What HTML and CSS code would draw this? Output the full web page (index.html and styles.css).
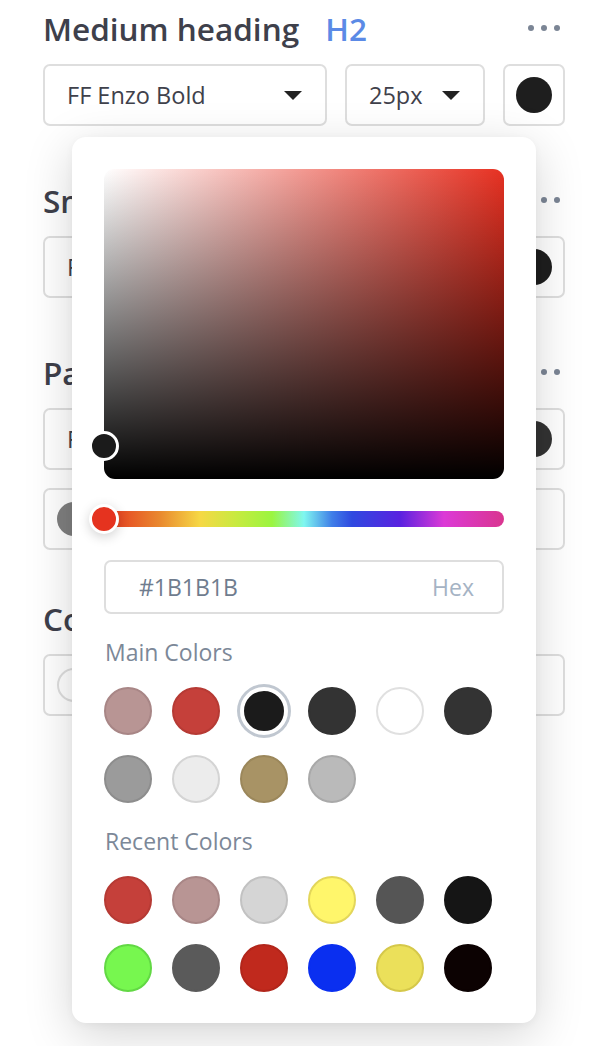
FILE: index.html
```html
<!DOCTYPE html>
<html>
<head>
<meta charset="utf-8">
<link rel="stylesheet" href="styles.css">
</head>
<body>
<div class="page">
  <section class="sec sec-first">
    <div class="sec-head">
      <h2 class="title">Medium heading <span class="tag">H2</span></h2>
      <span class="dots"><i></i><i></i><i></i></span>
    </div>
    <div class="row">
      <div class="field select font-sel"><span>FF Enzo Bold</span><span class="caret"></span></div>
      <div class="field select size-sel"><span>25px</span><span class="caret"></span></div>
      <div class="field color-box"><span class="dot d-black"></span></div>
    </div>
  </section>

  <section class="sec">
    <div class="sec-head">
      <h2 class="title">Small heading <span class="tag">H3</span></h2>
      <span class="dots"><i></i><i></i><i></i></span>
    </div>
    <div class="row">
      <div class="field select font-sel"><span>FF Enzo Bold</span><span class="caret"></span></div>
      <div class="field select size-sel"><span>20px</span><span class="caret"></span></div>
      <div class="field color-box"><span class="dot d-black"></span></div>
    </div>
  </section>

  <section class="sec sec-para">
    <div class="sec-head">
      <h2 class="title">Paragraph <span class="tag">P</span></h2>
      <span class="dots"><i></i><i></i><i></i></span>
    </div>
    <div class="row">
      <div class="field select font-sel"><span>FF Enzo Regular</span><span class="caret"></span></div>
      <div class="field select size-sel"><span>16px</span><span class="caret"></span></div>
      <div class="field color-box"><span class="dot d-dark"></span></div>
    </div>
    <div class="row">
      <div class="field wide"><span class="dot-sm d-grey"></span><span>Link</span></div>
    </div>
  </section>

  <section class="sec sec-last">
    <div class="sec-head">
      <h2 class="title">Co</h2>
    </div>
    <div class="row">
      <div class="field wide"><span class="dot-sm d-empty"></span></div>
    </div>
  </section>
</div>

<div class="popover">
  <div class="sat">
    <span class="sat-handle"></span>
  </div>
  <div class="hue">
    <span class="hue-handle"></span>
  </div>
  <div class="hex">
    <span class="hex-val">#1B1B1B</span>
    <span class="hex-lbl">Hex</span>
  </div>
  <div class="label">Main Colors</div>
  <div class="swatches">
    <span class="sw" style="background:#b89594;border-color:#a88686"></span>
    <span class="sw" style="background:#c5403a;border-color:#b63a34"></span>
    <span class="sw selected" style="background:#1b1b1b"></span>
    <span class="sw" style="background:#333333;border-color:#333333"></span>
    <span class="sw" style="background:#ffffff;border-color:#e0e0e0"></span>
    <span class="sw" style="background:#333333;border-color:#333333"></span>
    <span class="sw" style="background:#9b9b9b;border-color:#8d8d8d"></span>
    <span class="sw" style="background:#ececec;border-color:#d4d4d4"></span>
    <span class="sw" style="background:#a89365;border-color:#9b875b"></span>
    <span class="sw" style="background:#bababa;border-color:#a9a9a9"></span>
  </div>
  <div class="label">Recent Colors</div>
  <div class="swatches">
    <span class="sw" style="background:#c5403a;border-color:#b63a34"></span>
    <span class="sw" style="background:#b89594;border-color:#a88686"></span>
    <span class="sw" style="background:#d5d5d5;border-color:#c2c2c2"></span>
    <span class="sw" style="background:#fff66b;border-color:#e3d65a"></span>
    <span class="sw" style="background:#555555;border-color:#555555"></span>
    <span class="sw" style="background:#151515;border-color:#151515"></span>
    <span class="sw" style="background:#77f74f;border-color:#62d844"></span>
    <span class="sw" style="background:#5a5a5a;border-color:#5a5a5a"></span>
    <span class="sw" style="background:#c0291d;border-color:#b2261b"></span>
    <span class="sw" style="background:#0a2ff0;border-color:#0a2ff0"></span>
    <span class="sw" style="background:#ebe05a;border-color:#d5c84a"></span>
    <span class="sw" style="background:#0c0202;border-color:#0c0202"></span>
  </div>
</div>
</body>
</html>
```

FILE: styles.css
```css
* { box-sizing: border-box; }
html, body { margin: 0; padding: 0; background: #ffffff; }
body {
  width: 590px;
  height: 1046px;
  position: relative;
  overflow: hidden;
  font-family: "Open Sans", "Noto Sans", sans-serif;
  color: #3e404b;
}
.page {
  padding: 8px 25px 0 43px;
  display: flex;
  flex-direction: column;
}
.sec { display: flex; flex-direction: column; gap: 18px; margin-bottom: 54px; }
.sec.sec-para { margin-bottom: 48px; }
.sec .sec-head { margin-bottom: -2px; }
.sec-head {
  height: 40px;
  display: flex;
  align-items: center;
  justify-content: space-between;
}
.title {
  margin: 0;
  font-size: 31.5px;
  font-weight: 600;
  color: #3e404b;
  white-space: nowrap;
}
.tag { color: #5b8ae6; margin-left: 18px; }
.dots { display: flex; gap: 7px; padding-right: 5px; }
.dots i { width: 6px; height: 6px; border-radius: 50%; background: #7b8595; display: block; }
.row { display: flex; gap: 18px; }
.field {
  height: 62px;
  border: 2px solid #dedede;
  border-radius: 7px;
  background: #fff;
  display: flex;
  align-items: center;
  font-family: "Open Sans", sans-serif;
  font-size: 23.5px;
  color: #3f414b;
}
.select { justify-content: space-between; padding: 0 23px 0 22px; }
.font-sel { width: 284px; }
.size-sel { width: 140px; }
.color-box { width: 62px; justify-content: center; }
.wide { flex: 1; padding-left: 12px; gap: 14px; }
.caret {
  width: 0; height: 0;
  border-left: 9px solid transparent;
  border-right: 9px solid transparent;
  border-top: 9px solid #222;
}
.dot { width: 36px; height: 36px; border-radius: 50%; display: block; }
.dot-sm { width: 34px; height: 34px; border-radius: 50%; display: block; }
.d-black { background: #1e1e1e; }
.d-dark { background: #333; }
.d-grey { background: #7f7f7f; }
.d-empty { border: 2px solid #dedede; }

.popover {
  position: absolute;
  left: 72px;
  top: 137px;
  width: 464px;
  height: 886px;
  background: #fff;
  border-radius: 14px;
  box-shadow: 0 12px 48px rgba(0, 0, 0, 0.17), 0 2px 8px rgba(0,0,0,0.04);
  padding: 32px 32px 0 32px;
  display: flex;
  flex-direction: column;
}
.sat {
  position: relative;
  width: 400px;
  height: 310px;
  border-radius: 11px;
  background:
    linear-gradient(to top, #000 0%, rgba(0,0,0,0) 100%),
    linear-gradient(to right, #ffffff 0%, #e73122 100%);
}
.sat-handle {
  position: absolute;
  left: -15px;
  top: 262px;
  width: 30px;
  height: 30px;
  border-radius: 50%;
  background: #1b1b1b;
  border: 3px solid #fff;
}
.hue {
  position: relative;
  margin-top: 32px;
  width: 400px;
  height: 16px;
  border-radius: 8px;
  background: linear-gradient(to right,
    #e5331f 0%, #e9892f 14%, #f6d845 24%, #c8ea40 33%, #9bf540 42%,
    #7ff7f0 50%, #3f7ee8 57%, #2f49e0 62%, #5a22e0 74%, #dc3ad6 85%, #d9358f 100%);
}
.hue-handle {
  position: absolute;
  left: -15px;
  top: -7px;
  width: 30px;
  height: 30px;
  border-radius: 50%;
  background: #e5331f;
  border: 3px solid #fff;
  box-shadow: 0 3px 12px rgba(0,0,0,0.18);
}
.hex {
  margin-top: 33px;
  height: 54px;
  border: 2px solid #dedede;
  border-radius: 7px;
  display: flex;
  align-items: center;
  justify-content: space-between;
  padding: 0 28px 0 33px;
  font-family: "Open Sans", sans-serif;
  font-size: 23px;
}
.hex-val { color: #6f7c8e; }
.hex-lbl { color: #a5b3c4; }
.label {
  margin-top: 26px;
  height: 24px;
  line-height: 24px;
  font-size: 23px;
  color: #7c8898;
  padding-left: 1px;
}
.swatches {
  margin-top: 23px;
  display: grid;
  grid-template-columns: repeat(6, 48px);
  column-gap: 20px;
  row-gap: 20px;
}
.sw {
  width: 48px;
  height: 48px;
  border-radius: 50%;
  border: 2px solid transparent;
  display: block;
}
.sw.selected {
  border: 4px solid #fff;
  box-shadow: 0 0 0 3px #c0c7d0;
}
```
